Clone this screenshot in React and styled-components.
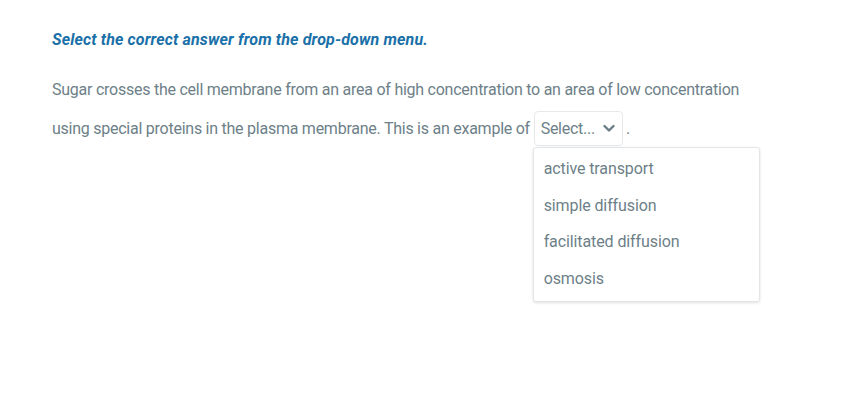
import React from 'react';
import styled, { createGlobalStyle } from 'styled-components';

const OPTIONS = ['active transport', 'simple diffusion', 'facilitated diffusion', 'osmosis'];

export default function App() {
  return (
    <Page>
      <GlobalStyle />
      <Prompt>Select the correct answer from the drop-down menu.</Prompt>
      <Question>
        Sugar crosses the cell membrane from an area of high concentration to an area of low concentration
        using special proteins in the plasma membrane. This is an example of{' '}
        <SelectWrap>
          <SelectBox>
            Select...
            <svg width="12" height="9" viewBox="0 0 12 9">
              <path d="M1.5 2 L6 6.5 L10.5 2" fill="none" stroke="#6b7c86" strokeWidth="2.4" strokeLinecap="round" strokeLinejoin="round" />
            </svg>
          </SelectBox>
          <Menu>
            {OPTIONS.map(opt => (
              <Option key={opt}>{opt}</Option>
            ))}
          </Menu>
        </SelectWrap>
        .
      </Question>
    </Page>
  );
}

const GlobalStyle = createGlobalStyle`
  body {
    margin: 0;
    background: #fff;
    font-family: Roboto, "Liberation Sans", sans-serif;
  }
`;

const Page = styled.div`
  box-sizing: border-box;
  min-height: 100vh;
  padding: 30px 52px 0;
`;

const Prompt = styled.p`
  margin: 0 0 21px;
  font-size: 16px;
  font-weight: 700;
  font-style: italic;
  letter-spacing: 0.15px;
  color: #1a70a8;
`;

const Question = styled.p`
  margin: 0;
  max-width: 720px;
  font-size: 16px;
  letter-spacing: -0.25px;
  line-height: 39px;
  color: #6d7f88;
`;

const SelectWrap = styled.span`
  position: relative;
  display: inline-block;
  margin-right: 3px;
`;

const SelectBox = styled.span`
  display: inline-flex;
  align-items: center;
  gap: 8px;
  height: 33px;
  padding: 0 7px 0 6px;
  border: 1px solid #e6e9eb;
  border-radius: 4px;
  line-height: 33px;
  vertical-align: baseline;
`;

const Menu = styled.div`
  position: absolute;
  left: -1px;
  top: 38px;
  width: 225px;
  padding: 3px 0 4px;
  background: #fff;
  border: 1px solid #e3e6e8;
  border-radius: 3px;
  box-shadow: 0 1px 3px rgba(0, 0, 0, 0.12);
  z-index: 2;
`;

const Option = styled.div`
  padding: 0 10px;
  line-height: 36.6px;
  font-size: 16px;
  letter-spacing: -0.1px;
  color: #6d7f88;
  white-space: nowrap;
`;
